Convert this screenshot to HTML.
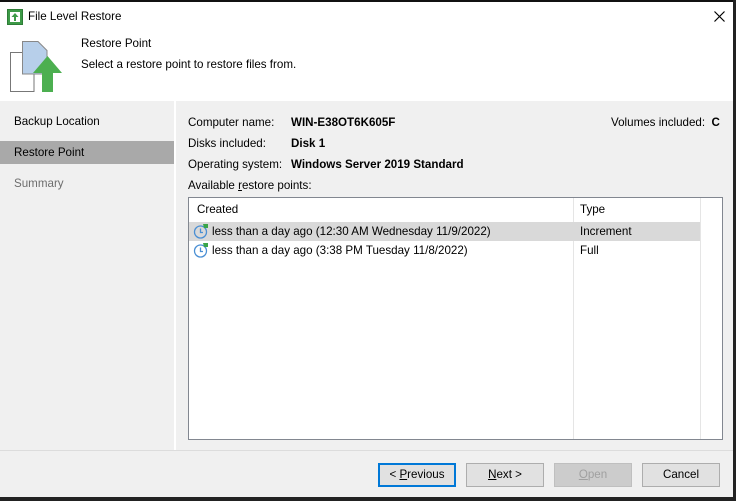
<!DOCTYPE html><html><head><style>
*{margin:0;padding:0;box-sizing:border-box}
body{width:736px;height:501px;overflow:hidden;font-family:"Liberation Sans",sans-serif;font-size:11.6px;color:#000;background:#f0f0f0;position:relative}
.a{position:absolute;white-space:nowrap}
.btn{position:absolute;top:463px;width:78px;height:24px;border:1px solid #adadad;background:#e1e1e1;text-align:center;line-height:22px}
</style></head><body>
<div class="a" style="left:0;top:0;width:736px;height:2px;background:#111"></div>
<div class="a" style="left:0;top:2px;width:736px;height:99px;background:#fff"></div>
<div class="a" style="left:733px;top:0;width:3px;height:501px;background:#222"></div>
<div class="a" style="left:0;top:497px;width:736px;height:4px;background:#222"></div>
<svg class="a" style="left:7px;top:9px" width="16" height="16"><rect x="0.5" y="0.5" width="15" height="15" fill="#3d9a47" stroke="#2e7d37"/><rect x="3" y="3" width="10" height="10" fill="#fff"/><path d="M8 4 L4.5 8 H7 V12 H9 V8 H11.5Z" fill="#3d9a47"/></svg>
<div class="a" style="left:28px;top:10px">File Level Restore</div>
<svg class="a" style="left:714px;top:11px" width="11" height="11"><path d="M0.5 0.5 L10.5 10.5 M10.5 0.5 L0.5 10.5" stroke="#000" stroke-width="1.2"/></svg>
<svg class="a" style="left:9px;top:40px" width="56" height="56"><path d="M1.5 12.5 H17 L25 20.5 V51.5 H1.5Z" fill="#fff" stroke="#777"/><path d="M13.5 1.5 H29 L38 10.5 V34 H13.5Z" fill="#b7cfea" stroke="#888"/><path d="M33 52 V33 H24 L38.5 16 L53 33 H44 V52Z" fill="#4caf50"/></svg>
<div class="a" style="left:81px;top:37px">Restore Point</div>
<div class="a" style="left:81px;top:58px">Select a restore point to restore files from.</div>
<div class="a" style="left:174px;top:101px;width:2px;height:349px;background:#fff"></div>
<div class="a" style="left:0;top:141px;width:174px;height:23px;background:#a9a9a9"></div>
<div class="a" style="left:14px;top:115px">Backup Location</div>
<div class="a" style="left:14px;top:146px">Restore Point</div>
<div class="a" style="left:14px;top:177px;color:#6d6d6d">Summary</div>
<div class="a" style="left:188px;top:116px">Computer name:</div><div class="a" style="left:291px;top:116px;font-weight:bold">WIN-E38OT6K605F</div>
<div class="a" style="left:188px;top:137px">Disks included:</div><div class="a" style="left:291px;top:137px;font-weight:bold">Disk 1</div>
<div class="a" style="left:188px;top:158px">Operating system:</div><div class="a" style="left:291px;top:158px;font-weight:bold">Windows Server 2019 Standard</div>
<div class="a" style="left:611px;top:116px">Volumes included:&nbsp; <b>C</b></div>
<div class="a" style="left:188px;top:179px">Available <u>r</u>estore points:</div>
<div class="a" style="left:188px;top:197px;width:535px;height:243px;background:#fff;border:1px solid #828790"></div>
<div class="a" style="left:573px;top:198px;width:1px;height:241px;background:#e5e5e5"></div>
<div class="a" style="left:700px;top:198px;width:1px;height:241px;background:#e5e5e5"></div>
<div class="a" style="left:189px;top:222px;width:511px;height:19px;background:#d9d9d9"></div>
<div class="a" style="left:197px;top:203px">Created</div><div class="a" style="left:580px;top:203px">Type</div>
<svg class="a" style="left:193px;top:223px" width="16" height="16"><circle cx="7.5" cy="9" r="6" fill="none" stroke="#4a8fd4" stroke-width="1.3"/><path d="M7.5 5.5 V9.5 H10" fill="none" stroke="#4a8fd4" stroke-width="1.3"/><path d="M10 1 H15 V5 H11Z" fill="#3aa548"/></svg>
<svg class="a" style="left:193px;top:242px" width="16" height="16"><circle cx="7.5" cy="9" r="6" fill="none" stroke="#4a8fd4" stroke-width="1.3"/><path d="M7.5 5.5 V9.5 H10" fill="none" stroke="#4a8fd4" stroke-width="1.3"/><path d="M10 1 H15 V5 H11Z" fill="#3aa548"/></svg>
<div class="a" style="left:212px;top:225px">less than a day ago (12:30 AM Wednesday 11/9/2022)</div><div class="a" style="left:580px;top:225px">Increment</div>
<div class="a" style="left:212px;top:244px">less than a day ago (3:38 PM Tuesday 11/8/2022)</div><div class="a" style="left:580px;top:244px">Full</div>
<div class="a" style="left:0;top:450px;width:733px;height:1px;background:#dcdcdc"></div>
<div class="btn" style="left:378px;border:2px solid #0078d7;line-height:20px">&lt; <u>P</u>revious</div>
<div class="btn" style="left:466px"><u>N</u>ext &gt;</div>
<div class="btn" style="left:554px;background:#ccc;border-color:#bfbfbf;color:#a0a0a0"><u>O</u>pen</div>
<div class="btn" style="left:642px">Cancel</div>
</body></html>
